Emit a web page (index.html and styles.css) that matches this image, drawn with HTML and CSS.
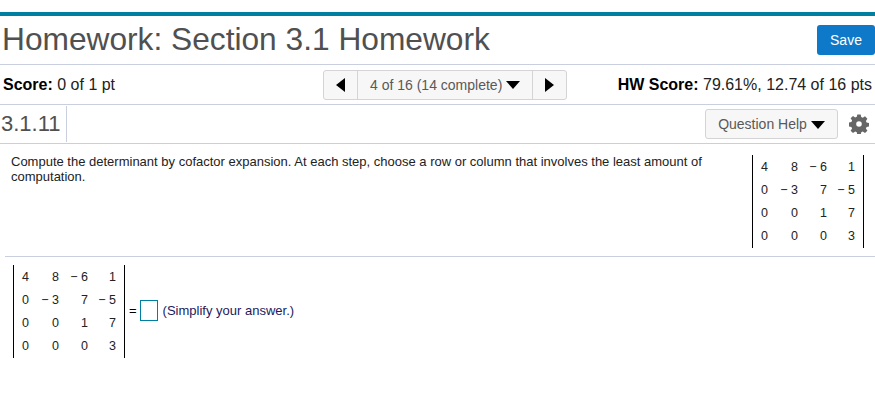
FILE: index.html
```html
<!DOCTYPE html>
<html lang="en">
<head>
  <meta charset="UTF-8" />
  <title>Homework: Section 3.1 Homework</title>
  <link rel="stylesheet" href="styles.css">
</head>
<body>
  <div class="topbar"></div>

  <div class="titulo">
    <h1>Homework: Section 3.1 Homework</h1>
    <button class="save">Save</button>
  </div>

  <div class="scores">
    <div class="score"><b>Score:</b> 0 of 1 pt</div>
    <div class="pager">
      <span class="pager-btn"><span class="seta-esq"></span></span>
      <span class="pager-meio">4 of 16 (14 complete)<span class="seta-baixo"></span></span>
      <span class="pager-btn"><span class="seta-dir"></span></span>
    </div>
    <div class="hwscore"><b>HW Score:</b> 79.61%, 12.74 of 16 pts</div>
  </div>

  <div class="numero">
    <div class="num">3.1.11</div>
    <div class="ferramentas">
      <button class="ajuda">Question Help<span class="seta-baixo"></span></button>
      <svg class="gear" width="20" height="20" viewBox="0 0 20 20">
        <path fill-rule="evenodd" fill="#666666" d="M8.300 .5h3.400l.5 2.600 1.600.7 2.200-1.500 2.400 2.400-1.500 2.200.7 1.600 2.600.5v3.400l-2.600.5-.7 1.600 1.500 2.200-2.400 2.400-2.200-1.500-1.600.7-.5 2.600H8.300l-.5-2.600-1.600-.7-2.200 1.500-2.400-2.400 1.500-2.200-.7-1.600-2.600-.5V8.600l2.600-.5.7-1.600-1.500-2.200 2.400-2.400 2.200 1.500 1.600-.7zM10 7.200a2.800 2.800 0 1 0 0 5.600 2.800 2.800 0 0 0 0-5.600z"/>
      </svg>
    </div>
  </div>

  <div class="enunciado">
    <p>Compute the determinant by cofactor expansion. At each step, choose a row or column that involves the least amount of computation.</p>
    <div class="matriz">
      <span>4</span><span>8</span><span>&minus; 6</span><span>1</span>
      <span>0</span><span>&minus; 3</span><span>7</span><span>&minus; 5</span>
      <span>0</span><span>0</span><span>1</span><span>7</span>
      <span>0</span><span>0</span><span>0</span><span>3</span>
    </div>
  </div>

  <div class="resposta">
    <div class="matriz">
      <span>4</span><span>8</span><span>&minus; 6</span><span>1</span>
      <span>0</span><span>&minus; 3</span><span>7</span><span>&minus; 5</span>
      <span>0</span><span>0</span><span>1</span><span>7</span>
      <span>0</span><span>0</span><span>0</span><span>3</span>
    </div>
    <div class="linha">
      <span class="igual">=</span>
      <input class="campo" type="text" />
      <span class="dica">(Simplify your answer.)</span>
    </div>
  </div>
</body>
</html>
```

FILE: styles.css
```css
* {
  box-sizing: border-box;
  margin: 0;
  padding: 0;
}

body {
  font-family: 'Liberation Sans', Arial, sans-serif;
  background-color: #ffffff;
  color: #000;
  padding-top: 12px;
}

.topbar {
  height: 4px;
  background-color: #007fa3;
}

.titulo {
  height: 49px;
  display: flex;
  align-items: center;
  justify-content: space-between;
  padding: 0 0 1px 2px;
  border-bottom: 1px solid #c9cfdf;
}

h1 {
  font-size: 31.700px;
  font-weight: 400;
  color: #505050;
}

.save {
  width: 58px;
  height: 30px;
  margin-top: 1px;
  background-color: #0f79c9;
  color: #fff;
  font-family: inherit;
  font-size: 14px;
  border: none;
  border-radius: 3px;
}

.scores {
  height: 40px;
  display: flex;
  align-items: center;
  padding: 0 3px;
  font-size: 16px;
  border-bottom: 1px solid #c9cfdf;
}

.score, .hwscore {
  color: #222;
}

.score b, .hwscore b {
  color: #000;
}

.score {
  width: 320px;
}

.hwscore {
  flex: 1;
  text-align: right;
}

.pager {
  display: flex;
  height: 30px;
  border: 1px solid #d4d4d4;
  border-radius: 3px;
  background-color: #f7f7f7;
  color: #595959;
  font-size: 14px;
}

.pager-btn {
  width: 33px;
  display: flex;
  align-items: center;
  justify-content: center;
}

.pager-meio {
  display: flex;
  align-items: center;
  width: 176px;
  padding-left: 12px;
  border-left: 1px solid #d4d4d4;
  border-right: 1px solid #d4d4d4;
}

.seta-esq {
  border-top: 7px solid transparent;
  border-bottom: 7px solid transparent;
  border-right: 9px solid #000;
}

.seta-dir {
  border-top: 7px solid transparent;
  border-bottom: 7px solid transparent;
  border-left: 9px solid #000;
}

.seta-baixo {
  display: inline-block;
  margin-left: 4px;
  border-left: 7px solid transparent;
  border-right: 7px solid transparent;
  border-top: 8px solid #000;
}

.numero {
  height: 39px;
  display: flex;
  align-items: center;
  justify-content: space-between;
  padding-left: 1px;
  border-bottom: 1px solid #c9cfdf;
}

.num {
  height: 36px;
  width: 66px;
  line-height: 36px;
  font-size: 22px;
  color: #505050;
  border-right: 1px solid #c9cfdf;
}

.ferramentas {
  display: flex;
  align-items: center;
  gap: 11px;
  padding-right: 6px;
}

.ajuda {
  width: 133px;
  height: 30px;
  background-color: #f7f7f7;
  color: #595959;
  font-family: inherit;
  font-size: 14px;
  border: 1px solid #d4d4d4;
  border-radius: 3px;
}

.enunciado {
  height: 113px;
  margin-left: 5px;
  padding: 11px 11px 0 6px;
  display: flex;
  justify-content: space-between;
  align-items: flex-start;
  border-bottom: 1px solid #c9cfdf;
  font-size: 13px;
  color: #222;
}

.enunciado p {
  width: 700px;
  margin-top: -1px;
  line-height: 15px;
}

.matriz {
  display: grid;
  grid-template-columns: 7px 30px 29px 28px;
  grid-auto-rows: 23.250px;
  align-items: center;
  justify-items: end;
  width: 112px;
  padding: 0 8px;
  border-left: 1px solid #000;
  border-right: 1px solid #000;
  font-size: 12.500px;
  color: #222;
  white-space: nowrap;
}

.resposta {
  display: flex;
  align-items: center;
  margin-top: 8px;
  padding-left: 13px;
  font-size: 13px;
}

.linha {
  display: flex;
  align-items: center;
  margin-bottom: 3px;
}

.igual {
  margin-left: 4px;
}

.campo {
  width: 18px;
  height: 21px;
  margin: 0 5px 0 3px;
  border: 1px solid #007fa3;
  background-color: #fff;
}

.dica {
  color: #1a1a5e;
}
```
